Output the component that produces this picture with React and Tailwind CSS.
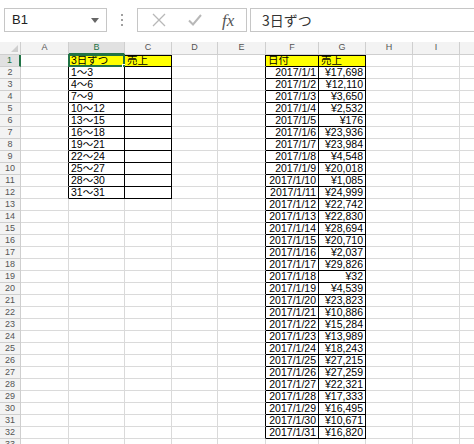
// Excel-like sheet: name box + formula bar, column/row headers, two bordered tables.
const COLS = ['A', 'B', 'C', 'D', 'E', 'F', 'G', 'H', 'I', 'J'];
const ROWS = Array.from({ length: 33 }, (_, i) => i + 1);

const SALES = [
  '¥17,698', '¥12,110', '¥3,650', '¥2,532', '¥176', '¥23,936', '¥23,984', '¥4,548',
  '¥20,018', '¥1,085', '¥24,999', '¥22,742', '¥22,830', '¥28,694', '¥20,710', '¥2,037',
  '¥29,826', '¥32', '¥4,539', '¥23,823', '¥10,886', '¥15,284', '¥13,989', '¥18,243',
  '¥27,215', '¥27,259', '¥22,321', '¥17,333', '¥16,495', '¥10,671', '¥16,820',
];

const cellFont = { fontFamily: '"Liberation Sans", "Noto Sans CJK JP", sans-serif' };

function inTable(col, row) {
  if ((col === 'B' || col === 'C') && row >= 1 && row <= 12) return true;
  if ((col === 'F' || col === 'G') && row >= 1 && row <= 32) return true;
  return false;
}

function cellText(col, row) {
  if (col === 'B') {
    if (row === 1) return '3日ずつ';
    if (row >= 2 && row <= 12) {
      const a = (row - 2) * 3 + 1;
      return `${a}～${Math.min(a + 2, 31)}`;
    }
  }
  if (col === 'C' && row === 1) return '売上';
  if (col === 'F') {
    if (row === 1) return '日付';
    if (row <= 32) return `2017/1/${row - 1}`;
  }
  if (col === 'G') {
    if (row === 1) return '売上';
    if (row <= 32) return SALES[row - 2];
  }
  return '';
}

function Cell({ col, row }) {
  const table = inTable(col, row);
  const next = COLS[COLS.indexOf(col) + 1];
  const leftOfTable = !table && next && inTable(next, row);
  const yellow = row === 1 && table;
  const right = row > 1 && (col === 'F' || col === 'G');
  const text = cellText(col, row);

  let cls = 'relative border-r border-b overflow-visible whitespace-nowrap leading-[11px] text-[10.5px] text-black px-[2px] ';
  cls += table ? 'border-black ' : 'border-[#dadada] ';
  if (leftOfTable) cls += 'border-r-black ';
  if (table && row === 1) cls += 'shadow-[inset_0_1px_0_#000] ';
  if (yellow) cls += 'bg-[#ffff00] ';
  else cls += 'bg-white ';
  cls += right ? 'text-right' : 'text-left';

  return (
    <div className={cls} style={cellFont}>
      {text}
      {col === 'B' && row === 1 && (
        <>
          <div className="absolute -left-[1px] -top-[1px] -right-[1px] -bottom-[1px] border-2 border-[#217346]" />
          <div className="absolute -right-[3px] -bottom-[3px] w-[5px] h-[5px] bg-[#217346] border border-white" />
        </>
      )}
    </div>
  );
}

function FormulaBar() {
  return (
    <div className="h-[42px] bg-white flex items-start pt-[8px] pl-[4px]">
      <div className="w-[103px] h-[24px] border border-[#c6c6c6] flex items-center justify-between pl-[7px] pr-[7px]">
        <span className="text-[13px] text-[#222]" style={{ fontFamily: '"Liberation Sans", sans-serif' }}>B1</span>
        <svg width="8" height="5" viewBox="0 0 8 5"><path d="M0 0h8L4 5z" fill="#666" /></svg>
      </div>
      <div className="w-[30px] h-[24px] flex flex-col items-center justify-center gap-[3px]">
        <span className="w-[2px] h-[2px] bg-[#a0a0a0]" />
        <span className="w-[2px] h-[2px] bg-[#a0a0a0]" />
        <span className="w-[2px] h-[2px] bg-[#a0a0a0]" />
      </div>
      <div className="w-[110px] h-[24px] border border-[#c6c6c6] flex items-center pl-[14px]">
        <svg width="14" height="14" viewBox="0 0 14 14">
          <path d="M1 1L13 13M13 1L1 13" stroke="#b8b8b8" strokeWidth="1.3" />
        </svg>
        <svg className="ml-[22px]" width="14" height="12" viewBox="0 0 14 12">
          <path d="M1 6.5L5 10.5L13 1" stroke="#b8b8b8" strokeWidth="2" fill="none" />
        </svg>
        <span
          className="ml-[20px] text-[17px] italic text-[#555] leading-none"
          style={{ fontFamily: '"Liberation Serif", serif' }}
        >
          fx
        </span>
      </div>
      <div className="ml-[3px] flex-1 h-[24px] border border-r-0 border-[#c6c6c6] flex items-center pl-[11px]">
        <span className="text-[14px] text-[#333]" style={{ fontFamily: '"Noto Sans CJK JP", sans-serif' }}>3日ずつ</span>
      </div>
    </div>
  );
}

export default function App() {
  return (
    <div className="w-[474px] h-[444px] overflow-hidden bg-white">
      <FormulaBar />
      <div className="grid grid-cols-[21px_48px_56px_47px_46px_48px_53px_47px_47px_47px_60px] grid-rows-[13px] auto-rows-[12px]">
        <div className="relative bg-[#f3f3f3] border-r border-b border-[#cfcfcf]">
          <svg className="absolute right-[2px] bottom-[2px]" width="7" height="7" viewBox="0 0 7 7">
            <path d="M7 0V7H0z" fill="#cfcfcf" />
          </svg>
        </div>
        {COLS.map((c) => (
          <div
            key={c}
            className={
              c === 'B'
                ? 'bg-[#e1e1e1] border-r border-[#cfcfcf] border-b-2 border-b-[#217346] text-[#217346] text-[9px] flex items-center justify-center'
                : 'bg-[#f3f3f3] border-r border-b border-[#cfcfcf] text-[#555] text-[9px] flex items-center justify-center'
            }
            style={{ fontFamily: '"Liberation Sans", sans-serif' }}
          >
            {c}
          </div>
        ))}
        {ROWS.map((r) => (
          <div key={r} className="contents">
            <div
              className={
                r === 1
                  ? 'bg-[#e1e1e1] border-b border-[#cfcfcf] border-r-2 border-r-[#217346] text-[#217346] text-[9px] flex items-center justify-center'
                  : 'bg-[#f3f3f3] border-r border-b border-[#cfcfcf] text-[#555] text-[9px] flex items-center justify-center'
              }
              style={{ fontFamily: '"Liberation Sans", sans-serif' }}
            >
              {r}
            </div>
            {COLS.map((c) => (
              <Cell key={c} col={c} row={r} />
            ))}
          </div>
        ))}
      </div>
    </div>
  );
}
